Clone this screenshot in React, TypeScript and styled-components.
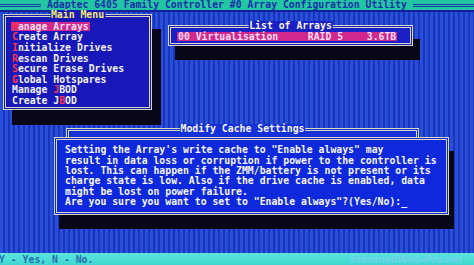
import styled, { createGlobalStyle } from "styled-components";

const GlobalStyle = createGlobalStyle`
  html, body {
    margin: 0;
    padding: 0;
    width: 474px;
    height: 265px;
    overflow: hidden;
    background: #000;
  }
`;

const menuItems = [
  { pre: "", hot: "M", post: "anage Arrays", active: true },
  { pre: "", hot: "C", post: "reate Array" },
  { pre: "", hot: "I", post: "nitialize Drives" },
  { pre: "", hot: "R", post: "escan Drives" },
  { pre: "", hot: "S", post: "ecure Erase Drives" },
  { pre: "", hot: "G", post: "lobal Hotspares" },
  { pre: "Manage ", hot: "J", post: "BOD" },
  { pre: "Create J", hot: "B", post: "OD" },
];

const warning = [
  `Setting the Array's write cache to "Enable always" may`,
  `result in data loss or corruption if power to the controller is`,
  `lost. This can happen if the ZMM/battery is not present or its`,
  `charge state is low. Also if the drive cache is enabled, data`,
  `might be lost on power failure.`,
  `Are you sure you want to set to "Enable always"?(Yes/No):_`,
];

const App = () => {
  return (
    <>
      <GlobalStyle />
      <Screen>
        <TopBar>
          <Rule $width="41px" />
          <TopTitle>Adaptec 6405 Family Controller #0 Array Configuration Utility</TopTitle>
          <Rule />
        </TopBar>

        <Desk>
          <TopRow>
            <MenuFrame>
              <FrameTitle $color="#f4e870" $bg="#1818b8">Main Menu</FrameTitle>
              {menuItems.map((m) => (
                <MenuRow key={m.pre + m.hot + m.post}>
                  <MenuLabel $active={m.active}>
                    {m.pre}
                    <Hot>{m.hot}</Hot>
                    {m.post}
                  </MenuLabel>
                </MenuRow>
              ))}
            </MenuFrame>

            <ListFrame>
              <FrameTitle $color="#f4f4ec" $bg="#1a20c4">List of Arrays</FrameTitle>
              <MenuRow>
                <MenuLabel $active>{"00 Virtualisation     RAID 5    3.6TB"}</MenuLabel>
              </MenuRow>
            </ListFrame>
          </TopRow>

          <Dialog>
            <DialogHeader>
              <FrameTitle $color="#f4f4ec" $bg="#1430d8">Modify Cache Settings</FrameTitle>
            </DialogHeader>
            <DialogBody>
              {warning.map((line) => (
                <TextLine key={line}>{line}</TextLine>
              ))}
            </DialogBody>
          </Dialog>
        </Desk>

        <BottomBar>
          Y - Yes, N - No.
          <Watermark>InformatiWeb-Pro.net</Watermark>
        </BottomBar>
      </Screen>
    </>
  );
};

export default App;

const Screen = styled.div`
  position: relative;
  width: 474px;
  height: 265px;
  display: flex;
  flex-direction: column;
  font-family: "DejaVu Sans Mono", "Liberation Mono", monospace;
  font-weight: bold;
  font-size: 9.8px;
  overflow: hidden;
`;

const TopBar = styled.div`
  height: 10px;
  flex: none;
  display: flex;
  align-items: center;
  background: #22c6a2;
  color: #1830a8;
  border-bottom: 2px solid #12209a;
`;

const Rule = styled.div<{ $width?: string }>`
  ${(p) => (p.$width ? `width: ${p.$width};` : "flex: 1;")}
  height: 1px;
  border-top: 1px solid #1a3aa8;
  border-bottom: 1px solid #1a3aa8;
`;

const TopTitle = styled.span`
  margin: 0 6px;
  line-height: 10px;
  white-space: pre;
`;

const Desk = styled.div`
  flex: 1;
  display: flex;
  flex-direction: column;
  background: repeating-linear-gradient(
    90deg,
    #2a4edc 0px,
    #2a4edc 3px,
    #1a36b8 3px,
    #1a36b8 5px
  );
`;

const TopRow = styled.div`
  display: flex;
  align-items: flex-start;
  padding-left: 3px;
  margin-top: 2px;
`;

const Frame = styled.div`
  position: relative;
  border: 3px double #d8d8bc;
  color: #f0f0f8;
`;

const FrameTitle = styled.span<{ $color: string; $bg: string }>`
  position: absolute;
  top: -7px;
  left: 50%;
  transform: translateX(-50%);
  padding: 0 1px;
  line-height: 10px;
  white-space: pre;
  color: ${(p) => p.$color};
  background: ${(p) => p.$bg};
`;

const MenuFrame = styled(Frame)`
  width: 137px;
  padding: 4px 0 1.5px 6px;
  background: #1818b8;
  box-shadow: 9px 15px 0 #070718;
`;

const ListFrame = styled(Frame)`
  width: 232px;
  margin: 10.5px 0 0 16px;
  padding: 4px 0 1px 7px;
  background: #1a20c4;
  box-shadow: 7px 14px 0 #070718;
`;

const MenuRow = styled.div`
  height: 10.6px;
  display: flex;
  align-items: center;
  white-space: pre;
`;

const MenuLabel = styled.span<{ $active?: boolean }>`
  line-height: 9px;
  margin-left: -1px;
  padding: 0 1px;
  background: ${(p) => (p.$active ? "#d0288c" : "transparent")};
  color: ${(p) => (p.$active ? "#f8dcf0" : "#f0f0f8")};
`;

const Hot = styled.span`
  color: #ff3050;
`;

const Dialog = styled.div`
  margin: 17.5px 0 0 54px;
  width: 402px;
  display: flex;
  flex-direction: column;
`;

const DialogHeader = styled.div`
  position: relative;
  margin-left: 12px;
  width: 347px;
  height: 6px;
  border: 3px double #d8d8bc;
  border-bottom: none;
  background: #1430d8;
`;

const DialogBody = styled(Frame)`
  width: 381px;
  padding: 5.5px 0 4px 8px;
  background: #0e28dc;
  box-shadow: 5px 14px 0 #070718;
`;

const TextLine = styled.div`
  height: 10.4px;
  line-height: 10.4px;
  white-space: pre;
  color: #f4f4fc;
`;

const BottomBar = styled.div`
  position: relative;
  height: 12px;
  flex: none;
  display: flex;
  align-items: center;
  margin-left: -1px;
  background: linear-gradient(180deg, #5ce4dc 0%, #40d6d2 100%);
  color: #2a6cb0;
  white-space: pre;
`;

const Watermark = styled.span`
  position: absolute;
  right: 12px;
  top: 0;
  line-height: 12px;
  font-family: "Liberation Sans", Arial, sans-serif;
  font-style: italic;
  font-weight: bold;
  font-size: 11px;
  color: rgba(150, 205, 255, 0.55);
`;
